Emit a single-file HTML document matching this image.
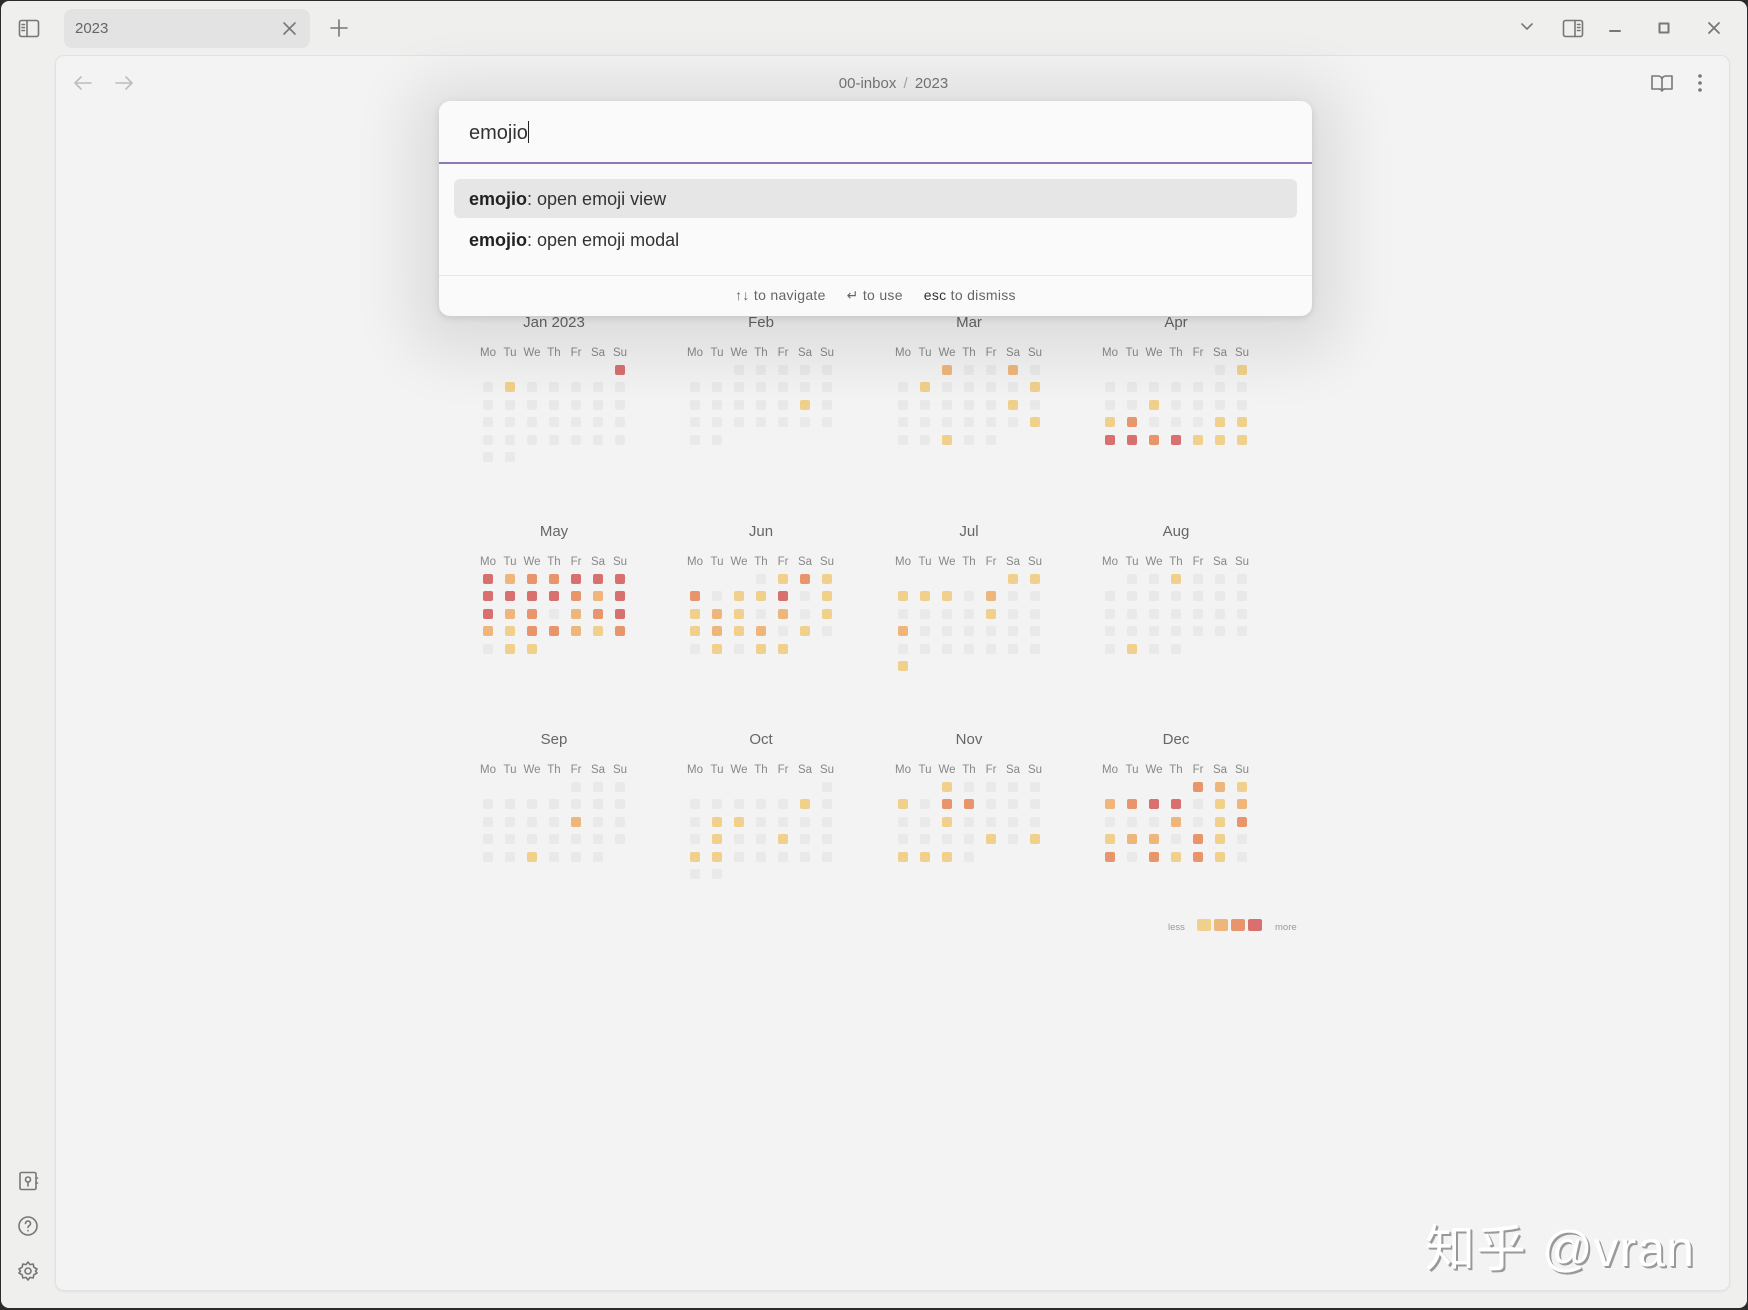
<!DOCTYPE html>
<html><head><meta charset="utf-8"><style>
*{margin:0;padding:0;box-sizing:border-box}
body{width:1748px;height:1310px;overflow:hidden;background:#2b2b2b;font-family:"Liberation Sans",sans-serif;position:relative}
#win{position:absolute;left:1px;top:1px;width:1746px;height:1307px;background:#efefee;border-radius:8px;overflow:hidden}
.abs{position:absolute}
#panel{position:absolute;left:54px;top:54px;width:1675px;height:1236px;background:#f3f3f3;border:1px solid #e2e2e2;border-radius:9px;box-shadow:0 1px 2px rgba(0,0,0,.06)}
#tab{position:absolute;left:63px;top:8px;width:246px;height:39px;background:#e3e3e3;border-radius:8px}
.ico{position:absolute;stroke:#777;fill:none;stroke-width:1.6;stroke-linecap:round;stroke-linejoin:round}
.month{position:absolute;width:154px}
.mlabel{text-align:center;font-size:15px;color:#666;height:18px;line-height:18px}
.hdr{display:grid;grid-template-columns:repeat(7,22px);font-size:11.5px;color:#888;text-align:center;margin-top:14px;height:14px;line-height:14px}
.cells{display:grid;grid-template-columns:repeat(7,22px);grid-auto-rows:17.5px;margin-top:1px}
.cells i{display:block;width:10px;height:10px;border-radius:2px;margin:3.75px 6px}
.c0{background:#e9e9e9}.c1{background:#f1d08b}.c2{background:#efb67b}.c3{background:#e8956c}.c4{background:#d8706f}.cx{background:transparent}
#modal{position:absolute;left:438px;top:100px;width:873px;height:215px;background:#fafafa;border-radius:11px;box-shadow:0 10px 60px 30px rgba(0,0,0,.09),0 2px 8px rgba(0,0,0,.12)}
</style></head><body>
<div id="win">
<svg class="ico" style="left:17px;top:18px" width="22" height="20" viewBox="0 0 22 20"><rect x="1.5" y="1.5" width="19" height="16" rx="2"/><path d="M9 1.5v16M4 5.5h2.5M4 8.5h2.5M4 11.5h2.5"/></svg>
<div id="tab"><span class="abs" style="left:11px;top:11px;font-size:15px;color:#666">2023</span>
<svg class="ico" style="left:218px;top:12px" width="15" height="15" viewBox="0 0 15 15"><path d="M2 2l11 11M13 2L2 13"/></svg></div>
<svg class="ico" style="left:328px;top:17px" width="20" height="20" viewBox="0 0 20 20"><path d="M10 2v16M2 10h16"/></svg>
<svg class="ico" style="left:1519px;top:21px" width="14" height="10" viewBox="0 0 14 10"><path d="M2 2l5 5 5-5"/></svg>
<svg class="ico" style="left:1561px;top:18px" width="22" height="19" viewBox="0 0 22 19"><rect x="1.5" y="1.5" width="19" height="16" rx="2"/><path d="M13 1.5v16M15.5 5.5h2.5M15.5 8.5h2.5M15.5 11.5h2.5"/></svg>
<svg class="ico" style="left:1607px;top:26px" width="14" height="8" viewBox="0 0 14 8"><path d="M2 4h10" stroke-width="2"/></svg>
<svg class="ico" style="left:1656px;top:20px" width="14" height="14" viewBox="0 0 14 14"><rect x="2.5" y="2.5" width="9" height="9" stroke-width="2"/></svg>
<svg class="ico" style="left:1705px;top:19px" width="16" height="16" viewBox="0 0 16 16"><path d="M3 3l10 10M13 3L3 13" stroke-width="1.8"/></svg>

<svg class="ico" style="left:16px;top:1169px" width="22" height="22" viewBox="0 0 22 22"><rect x="3" y="2.5" width="16" height="17" rx="1.5"/><circle cx="11" cy="9.5" r="2.5"/><path d="M11 12v4M19 8h1.5M19 13h1.5"/></svg>
<svg class="ico" style="left:16px;top:1214px" width="22" height="22" viewBox="0 0 22 22"><circle cx="11" cy="11" r="9"/><path d="M8.5 8.5a2.5 2.5 0 1 1 3.5 2.3c-.7.4-1 .8-1 1.7M11 15.5v.3"/></svg>
<svg class="ico" style="left:16px;top:1259px" width="22" height="22" viewBox="0 0 22 22"><circle cx="11" cy="11" r="3"/><path d="M11 2l2 2.6 3.2-.6.6 3.2L20 9l-1.5 2 1.5 2-3.2 1.8-.6 3.2-3.2-.6L11 20l-2-2.6-3.2.6-.6-3.2L2 13l1.5-2L2 9l3.2-1.8.6-3.2 3.2.6z"/></svg>

<div id="panel">
<svg class="ico" style="left:17px;top:18px;stroke:#bdbdbd" width="20" height="18" viewBox="0 0 20 18"><path d="M18 9H2M8 3L2 9l6 6"/></svg>
<svg class="ico" style="left:58px;top:18px;stroke:#bdbdbd" width="20" height="18" viewBox="0 0 20 18"><path d="M2 9h16M12 3l6 6-6 6"/></svg>
<div class="abs" style="left:0;width:1675px;top:19px;text-align:center;font-size:15px;color:#777">00-inbox <span style="color:#aaa;margin:0 3px">/</span> 2023</div>
<svg class="ico" style="left:1594px;top:17px" width="24" height="20" viewBox="0 0 24 20"><path d="M12 4.5v13M2 3h6.5a3.5 3.5 0 0 1 3.5 3.5A3.5 3.5 0 0 1 15.5 3H22v13h-6.5a3.5 3.5 0 0 0-3.5 2 3.5 3.5 0 0 0-3.5-2H2z"/></svg>
<svg class="abs" style="left:1640px;top:16px" width="8" height="22" viewBox="0 0 8 22" fill="#777"><circle cx="4" cy="4" r="1.8"/><circle cx="4" cy="11" r="1.8"/><circle cx="4" cy="18" r="1.8"/></svg>
</div>

<div class="abs" style="left:1167px;top:921px;font-size:9.5px;color:#999">less</div>
<div class="abs" style="left:1196px;top:918px;display:flex;gap:3px"><i style="width:14px;height:12px;border-radius:2px" class="c1"></i><i style="width:14px;height:12px;border-radius:2px" class="c2"></i><i style="width:14px;height:12px;border-radius:2px" class="c3"></i><i style="width:14px;height:12px;border-radius:2px" class="c4"></i></div>
<div class="abs" style="left:1274px;top:921px;font-size:9.5px;color:#999">more</div>

<div class="abs" style="left:1424px;top:1208px;font-size:50px;color:#fff;text-shadow:2px 2px 0 #999,1px 1px 0 #aaa;font-family:'Liberation Sans','Noto Sans CJK SC',sans-serif;letter-spacing:1px">知乎 @vran</div>
</div>

<div id="months" style="display:none">
<div>......4|0100000|0000000|0000000|0000000|00</div>
<div>..00000|0000000|0000010|0000000|00</div>
<div>..20020|0100001|0000010|0000001|00100</div>
<div>.....01|0000000|0010000|1300011|4434111</div>
<div>4233444|4444324|4230234|2133213|011</div>
<div>...0131|3011401|1210201|1212010|01011</div>
<div>.....11|1110200|0000100|2000000|0000000|1</div>
<div>.001000|0000000|0000000|0000000|0100</div>
<div>....000|0000000|0000200|0000000|001000</div>
<div>......0|0000010|0110000|0100100|1100000|00</div>
<div>..10000|1033000|0010000|0000101|1110</div>
<div>....321|2344012|0002013|1220310|3031310</div>
</div>
<div class="month" style="left:477px;top:314px"><div class="mlabel">Jan 2023</div><div class="hdr"><span>Mo</span><span>Tu</span><span>We</span><span>Th</span><span>Fr</span><span>Sa</span><span>Su</span></div><div class="cells"></div></div>
<div class="month" style="left:684px;top:314px"><div class="mlabel">Feb</div><div class="hdr"><span>Mo</span><span>Tu</span><span>We</span><span>Th</span><span>Fr</span><span>Sa</span><span>Su</span></div><div class="cells"></div></div>
<div class="month" style="left:892px;top:314px"><div class="mlabel">Mar</div><div class="hdr"><span>Mo</span><span>Tu</span><span>We</span><span>Th</span><span>Fr</span><span>Sa</span><span>Su</span></div><div class="cells"></div></div>
<div class="month" style="left:1099px;top:314px"><div class="mlabel">Apr</div><div class="hdr"><span>Mo</span><span>Tu</span><span>We</span><span>Th</span><span>Fr</span><span>Sa</span><span>Su</span></div><div class="cells"></div></div>
<div class="month" style="left:477px;top:523px"><div class="mlabel">May</div><div class="hdr"><span>Mo</span><span>Tu</span><span>We</span><span>Th</span><span>Fr</span><span>Sa</span><span>Su</span></div><div class="cells"></div></div>
<div class="month" style="left:684px;top:523px"><div class="mlabel">Jun</div><div class="hdr"><span>Mo</span><span>Tu</span><span>We</span><span>Th</span><span>Fr</span><span>Sa</span><span>Su</span></div><div class="cells"></div></div>
<div class="month" style="left:892px;top:523px"><div class="mlabel">Jul</div><div class="hdr"><span>Mo</span><span>Tu</span><span>We</span><span>Th</span><span>Fr</span><span>Sa</span><span>Su</span></div><div class="cells"></div></div>
<div class="month" style="left:1099px;top:523px"><div class="mlabel">Aug</div><div class="hdr"><span>Mo</span><span>Tu</span><span>We</span><span>Th</span><span>Fr</span><span>Sa</span><span>Su</span></div><div class="cells"></div></div>
<div class="month" style="left:477px;top:731px"><div class="mlabel">Sep</div><div class="hdr"><span>Mo</span><span>Tu</span><span>We</span><span>Th</span><span>Fr</span><span>Sa</span><span>Su</span></div><div class="cells"></div></div>
<div class="month" style="left:684px;top:731px"><div class="mlabel">Oct</div><div class="hdr"><span>Mo</span><span>Tu</span><span>We</span><span>Th</span><span>Fr</span><span>Sa</span><span>Su</span></div><div class="cells"></div></div>
<div class="month" style="left:892px;top:731px"><div class="mlabel">Nov</div><div class="hdr"><span>Mo</span><span>Tu</span><span>We</span><span>Th</span><span>Fr</span><span>Sa</span><span>Su</span></div><div class="cells"></div></div>
<div class="month" style="left:1099px;top:731px"><div class="mlabel">Dec</div><div class="hdr"><span>Mo</span><span>Tu</span><span>We</span><span>Th</span><span>Fr</span><span>Sa</span><span>Su</span></div><div class="cells"></div></div>

<div id="modal" style="left:439px;top:101px">
<div class="abs" style="left:30px;top:20px;font-size:20px;color:#333">emojio<span style="display:inline-block;width:1px;height:22px;background:#222;vertical-align:-4px"></span></div>
<div class="abs" style="left:0;top:61px;width:873px;height:2px;background:#8b78b8"></div>
<div class="abs" style="left:15px;top:78px;width:843px;height:39px;background:#e6e6e6;border-radius:6px"></div>
<div class="abs" style="left:30px;top:88px;font-size:18px;color:#333"><b style="color:#222">emojio</b>: open emoji view</div>
<div class="abs" style="left:30px;top:129px;font-size:18px;color:#333"><b style="color:#222">emojio</b>: open emoji modal</div>
<div class="abs" style="left:0;top:174px;width:873px;height:1px;background:#e6e6e6"></div>
<div class="abs" style="left:0;top:186px;width:873px;text-align:center;font-size:14px;color:#666;letter-spacing:.3px">↑↓ to navigate &nbsp;&nbsp;&nbsp; ↵ to use &nbsp;&nbsp;&nbsp; <b style="font-weight:normal;color:#333">esc</b> to dismiss</div>
</div>
<script>
var data=document.querySelectorAll('#months div'),ms=document.querySelectorAll('.month .cells');
data.forEach(function(d,i){var s=d.textContent.replace(/\|/g,''),h='';for(var k=0;k<s.length;k++){h+='<i class="'+(s[k]=='.'?'cx':'c'+s[k])+'"></i>';}ms[i].innerHTML=h;});
</script>
</body></html>
